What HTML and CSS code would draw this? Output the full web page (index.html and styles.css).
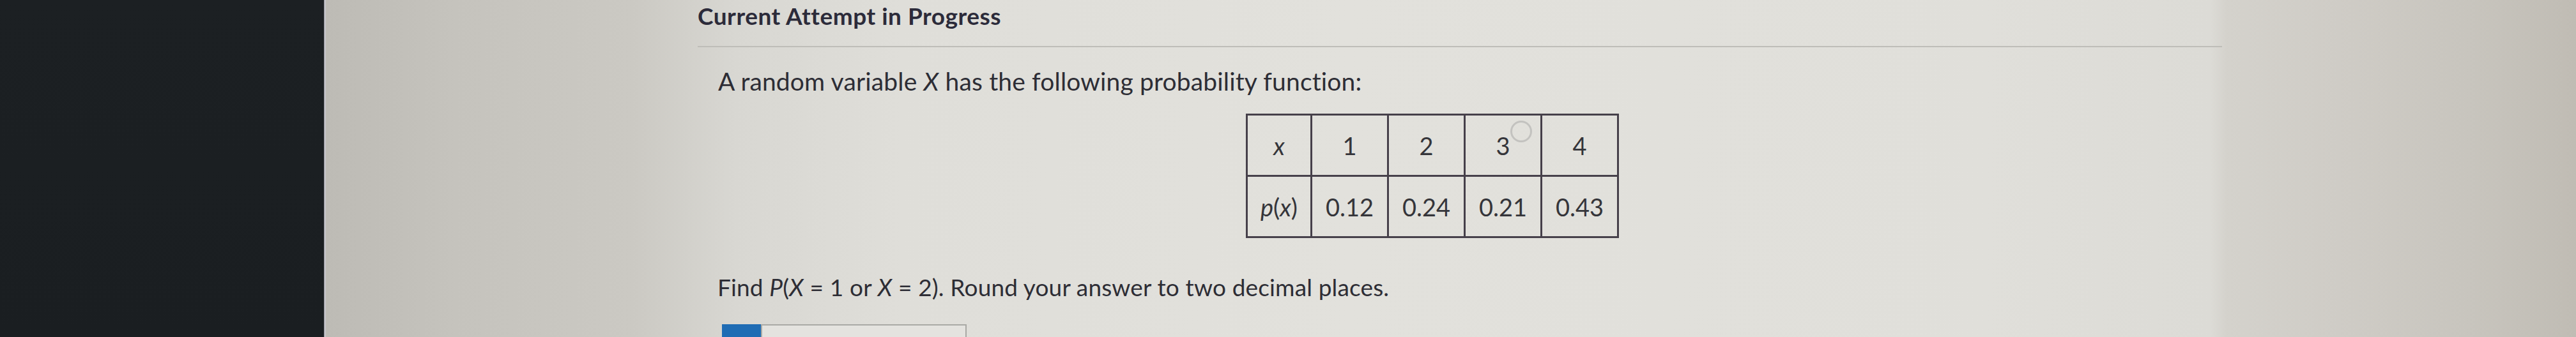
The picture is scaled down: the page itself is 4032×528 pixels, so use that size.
FILE: index.html
```html
<!DOCTYPE html>
<html lang="en">
<head>
<meta charset="utf-8">
<title>Current Attempt in Progress</title>
<link rel="stylesheet" href="styles.css">
</head>
<body>
<div class="screen">
  <aside class="bezel"></aside>
  <div class="edge"></div>
  <main class="page">
    <div class="content">
      <h2 class="attempt-title">Current Attempt in Progress</h2>
      <div class="rule"></div>
      <section class="question">
        <p class="prompt">A random variable <i>X</i> has the following probability function:</p>
        <table class="pf-table">
          <colgroup>
            <col class="c-head"><col class="c-val"><col class="c-val"><col class="c-val"><col class="c-val">
          </colgroup>
          <tr>
            <td><i>x</i></td>
            <td>1</td>
            <td>2</td>
            <td class="has-ring">3<span class="ring"></span></td>
            <td>4</td>
          </tr>
          <tr>
            <td><i>p</i>(<i>x</i>)</td>
            <td>0.12</td>
            <td>0.24</td>
            <td>0.21</td>
            <td>0.43</td>
          </tr>
        </table>
        <p class="ask">Find <i>P</i>(<i>X</i> = 1 or <i>X</i> = 2). Round your answer to two decimal places.</p>
        <div class="answer">
          <span class="answer-tab"></span>
          <span class="answer-field"></span>
        </div>
      </section>
    </div>
  </main>
</div>
</body>
</html>
```

FILE: styles.css
```css
html, body {
  margin: 0;
  padding: 0;
}

body {
  width: 4032px;
  height: 528px;
  overflow: hidden;
  font-family: "Lato", "Liberation Sans", sans-serif;
  color: #2f2f37;
}

.screen {
  display: flex;
  width: 4032px;
  height: 528px;
  overflow: hidden;
}

.bezel {
  flex: 0 0 507px;
  background: linear-gradient(180deg, #1c2023 0%, #1a1e21 100%);
}

.edge {
  flex: 0 0 3px;
  background: linear-gradient(90deg, #9a9aa0, #d6d6dc);
}

.page {
  flex: 1 1 auto;
  background: linear-gradient(90deg,
    #bdbbb5 0px,
    #c5c3bd 200px,
    #cbc9c3 480px,
    #d8d7d2 640px,
    #dfded9 900px,
    #e2e1dc 1600px,
    #e0dfda 2600px,
    #dcdbd6 2950px,
    #d4d2cc 2975px,
    #cfccc6 3150px,
    #c8c5be 3350px,
    #c0bcb4 3522px);
}

.content {
  margin-left: 582px;
  width: 2386px;
  padding-top: 3px;
}

.attempt-title {
  margin: 0;
  font-size: 37px;
  line-height: 43px;
  font-weight: 700;
  color: #2c2b3a;
  letter-spacing: 0.5px;
}

.rule {
  margin-top: 26px;
  height: 2px;
  background: #bebdb8;
}

.question {
  padding-left: 32px;
}

.prompt {
  margin: 30px 0 0 0;
  font-size: 39px;
  line-height: 46px;
  color: #2d2d35;
  letter-spacing: 0.15px;
}

.pf-table {
  margin: 28px 0 0 826px;
  border-collapse: collapse;
  table-layout: fixed;
  width: 582px;
  font-size: 38px;
  color: #35353a;
}

.c-head { width: 101px; }
.c-val { width: 120px; }

.pf-table td {
  border: 3px solid #46404a;
  height: 93px;
  padding: 0;
  text-align: center;
  vertical-align: middle;
}

.has-ring {
  position: relative;
}

.ring {
  position: absolute;
  left: 70px;
  top: 8px;
  width: 28px;
  height: 28px;
  border: 3px solid rgba(150, 150, 150, 0.4);
  border-radius: 50%;
}

.ask {
  margin: 55px 0 0 -1px;
  font-size: 37px;
  line-height: 44px;
  color: #2d2d35;
  letter-spacing: 0.15px;
}

.answer {
  display: flex;
  margin: 36px 0 0 6px;
  width: 383px;
  height: 40px;
}

.answer-tab {
  flex: 0 0 61px;
  background: #1f6cb4;
}

.answer-field {
  flex: 1 1 auto;
  border: 2px solid #a9a9a5;
  border-bottom: none;
  background: #e4e3df;
}
```
